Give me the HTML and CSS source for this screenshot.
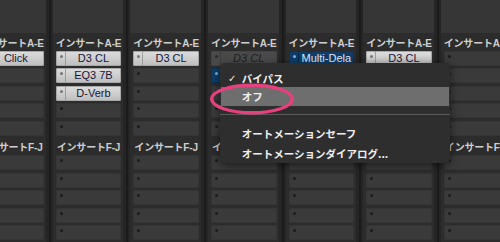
FILE: index.html
```html
<!DOCTYPE html>
<html lang="ja">
<head>
<meta charset="utf-8">
<link rel="stylesheet" href="styles.css">
</head>
<body>
<div class="mixer">
  <div class="strip">
    <div class="top"></div>
    <div class="hdr">インサートA-E</div>
    <div class="slots">
      <div class="slot ins"><span class="sel"></span><span class="name">Click</span></div>
      <div class="slot"></div><div class="slot"></div><div class="slot"></div><div class="slot"></div>
    </div>
    <div class="hdr hdr2">インサートF-J</div>
    <div class="slots">
      <div class="slot"></div><div class="slot"></div><div class="slot"></div><div class="slot"></div><div class="slot"></div>
    </div>
  </div>
  <div class="strip">
    <div class="top"></div>
    <div class="hdr">インサートA-E</div>
    <div class="slots">
      <div class="slot ins"><span class="sel"></span><span class="name">D3 CL</span></div>
      <div class="slot ins"><span class="sel"></span><span class="name">EQ3 7B</span></div>
      <div class="slot ins"><span class="sel"></span><span class="name">D-Verb</span></div>
      <div class="slot"></div><div class="slot"></div>
    </div>
    <div class="hdr hdr2">インサートF-J</div>
    <div class="slots">
      <div class="slot"></div><div class="slot"></div><div class="slot"></div><div class="slot"></div><div class="slot"></div>
    </div>
  </div>
  <div class="strip">
    <div class="top"></div>
    <div class="hdr">インサートA-E</div>
    <div class="slots">
      <div class="slot ins"><span class="sel"></span><span class="name">D3 CL</span></div>
      <div class="slot"></div><div class="slot"></div><div class="slot"></div><div class="slot"></div>
    </div>
    <div class="hdr hdr2">インサートF-J</div>
    <div class="slots">
      <div class="slot"></div><div class="slot"></div><div class="slot"></div><div class="slot"></div><div class="slot"></div>
    </div>
  </div>
  <div class="strip">
    <div class="top"></div>
    <div class="hdr">インサートA-E</div>
    <div class="slots">
      <div class="slot byp"><span class="sel"></span><span class="name">D3 CL</span></div>
      <div class="slot act"><span class="sel"></span><span class="name"></span></div>
      <div class="slot"></div><div class="slot"></div><div class="slot"></div>
    </div>
    <div class="hdr hdr2">インサートF-J</div>
    <div class="slots">
      <div class="slot"></div><div class="slot"></div><div class="slot"></div><div class="slot"></div><div class="slot"></div>
    </div>
  </div>
  <div class="strip">
    <div class="top"></div>
    <div class="hdr">インサートA-E</div>
    <div class="slots">
      <div class="slot act"><span class="sel"></span><span class="name">Multi-Dela</span></div>
      <div class="slot"></div><div class="slot"></div><div class="slot"></div><div class="slot"></div>
    </div>
    <div class="hdr hdr2">インサートF-J</div>
    <div class="slots">
      <div class="slot"></div><div class="slot"></div><div class="slot"></div><div class="slot"></div><div class="slot"></div>
    </div>
  </div>
  <div class="strip">
    <div class="top"></div>
    <div class="hdr">インサートA-E</div>
    <div class="slots">
      <div class="slot ins"><span class="sel"></span><span class="name">D3 CL</span></div>
      <div class="slot"></div><div class="slot"></div><div class="slot"></div><div class="slot"></div>
    </div>
    <div class="hdr hdr2">インサートF-J</div>
    <div class="slots">
      <div class="slot"></div><div class="slot"></div><div class="slot"></div><div class="slot"></div><div class="slot"></div>
    </div>
  </div>
  <div class="strip">
    <div class="top"></div>
    <div class="hdr">インサートA-E</div>
    <div class="slots">
      <div class="slot"></div><div class="slot"></div><div class="slot"></div><div class="slot"></div><div class="slot"></div>
    </div>
    <div class="hdr hdr2">インサートF-J</div>
    <div class="slots">
      <div class="slot"></div><div class="slot"></div><div class="slot"></div><div class="slot"></div><div class="slot"></div>
    </div>
  </div>
</div>

<div class="menu">
  <div class="item"><span class="check">✓</span><span>バイパス</span></div>
  <div class="item hl"><span class="check"></span><span>オフ</span></div>
  <div class="sep"></div>
  <div class="item tall"><span class="check"></span><span>オートメーションセーフ</span></div>
  <div class="item tall"><span class="check"></span><span>オートメーションダイアログ...</span></div>
</div>

<svg class="circle" width="100" height="44" viewBox="0 0 100 44">
  <ellipse cx="50" cy="22" rx="40.3" ry="13.8" fill="none" stroke="#e6407f" stroke-width="3.4"/>
</svg>
</body>
</html>
```

FILE: styles.css
```css
html, body {
  margin: 0;
  padding: 0;
  width: 500px;
  height: 242px;
  overflow: hidden;
  background: #262626;
}

body {
  position: relative;
  font-family: "Liberation Sans", "Noto Sans CJK JP", sans-serif;
}

.mixer {
  display: flex;
  margin-left: -32px;
  height: 242px;
}

.strip {
  flex: 0 0 77px;
  box-sizing: border-box;
  padding: 0 2px 0 10px;
  background: linear-gradient(to right, #252525 0 3px, #1b1b1b 3px 5px, #252525 5px 7px, #2c2c2c 7px);
  display: flex;
  flex-direction: column;
}

.top {
  height: 33px;
  margin: 0 -2px 0 -3px;
  background: #363636;
}

.hdr {
  height: 15px;
  padding-top: 3px;
  line-height: 15px;
  font-size: 10px;
  font-weight: bold;
  color: #cfcfcf;
  text-align: center;
  white-space: nowrap;
  letter-spacing: -0.2px;
}

.hdr2 {
  padding-top: 4.9px;
}

.slots {
  display: flex;
  flex-direction: column;
  gap: 2.4px;
}

.slot {
  position: relative;
  height: 15px;
  border-radius: 2px;
  background: #3a3a3a;
  display: flex;
  box-shadow: inset 0 0 0 1px #353535;
}

.slot::before {
  content: "";
  position: absolute;
  left: 4px;
  top: 4px;
  width: 3px;
  height: 3px;
  border-radius: 50%;
  background: #1c1c1c;
}

.sel {
  flex: 0 0 10px;
  box-sizing: border-box;
}

.name {
  flex: 1;
  min-width: 0;
  overflow: hidden;
  white-space: nowrap;
  text-align: center;
  font-size: 11px;
  line-height: 15px;
}

.ins {
  background: linear-gradient(#dedede, #bdbdbd);
  box-shadow: inset 0 0 0 1px #a8a8a8;
}

.ins::before {
  background: #767676;
}

.ins .sel {
  border-right: 1px solid #9c9c9c;
}

.ins .name {
  color: #15153c;
}

.byp {
  background: #4a4a4a;
  box-shadow: inset 0 0 0 1px #444;
}

.byp::before {
  background: #2a2a2a;
}

.byp .sel {
  border-right: 1px solid #3e3e3e;
}

.byp .name {
  color: #1e1e1e;
  font-style: italic;
}

.act {
  background: #0f3d69;
  box-shadow: inset 0 0 0 1px #0c3358;
}

.act::before {
  background: #7fb2e0;
}

.act .sel {
  border-right: 1px solid #0a2a4b;
}

.act .name {
  color: #e2eaf2;
}

.menu {
  position: absolute;
  left: 220px;
  top: 63px;
  width: 230px;
  height: 100px;
  box-sizing: border-box;
  padding-top: 6px;
  background: #2e2e2e;
  border-radius: 5px;
  box-shadow: 0 2px 8px rgba(0, 0, 0, 0.55);
  font-family: "Noto Sans CJK JP", "DejaVu Sans", sans-serif;
  font-size: 10.5px;
  font-weight: bold;
  color: #f0f0f0;
}

.item {
  height: 18px;
  display: flex;
  align-items: center;
  padding-left: 8px;
}

.item.hl {
  height: 19px;
  margin: 0 1px;
  padding-left: 7px;
  background: #6e6e6e;
}

.item.tall {
  height: 20px;
}

.check {
  flex: 0 0 13.7px;
  font-family: "DejaVu Sans", sans-serif;
  font-size: 10px;
}

.sep {
  height: 1px;
  margin: 8px 0;
  background: #5a5a5a;
}

.circle {
  position: absolute;
  left: 202px;
  top: 76.5px;
  overflow: visible;
}
```
